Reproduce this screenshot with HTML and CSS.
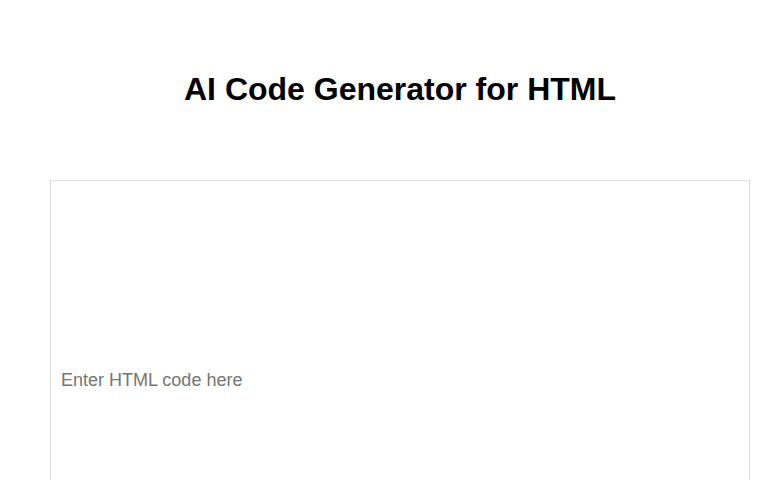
FILE: index.html
```html
<!DOCTYPE html>
<html>
<head>
<meta charset="utf-8">
<link rel="stylesheet" href="styles.css">
</head>
<body>
<main class="page">
  <h1 class="title">AI Code Generator for HTML</h1>
  <form class="form">
    <input class="code-input" type="text" placeholder="Enter HTML code here">
  </form>
</main>
</body>
</html>
```
FILE: styles.css
```css
html, body {
  margin: 0;
  padding: 0;
  background: #fff;
  font-family: "Liberation Sans", Arial, sans-serif;
}
.page {
  width: 700px;
  margin-left: 50px;
  padding-top: 50px;
}
.title {
  margin: 21px 0 0;
  text-align: center;
  font-size: 32px;
  font-weight: bold;
  color: #000;
}
.form {
  margin-top: 72px;
}
.code-input {
  box-sizing: border-box;
  display: block;
  width: 700px;
  height: 400px;
  padding: 10px;
  border: 1px solid #ddd;
  font-family: "Liberation Sans", Arial, sans-serif;
  font-size: 18px;
  outline: none;
}
.code-input::placeholder {
  color: #757575;
}
```
